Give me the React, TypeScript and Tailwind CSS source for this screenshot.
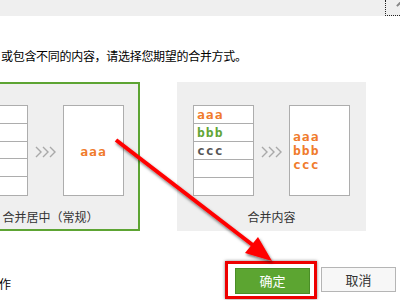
import * as React from "react";

const FONT = "font-['Noto_Sans_CJK_SC','Noto_Sans',sans-serif]";
const MONO = "font-['DejaVu_Sans_Mono','Liberation_Mono',monospace]";

type Cell = { text: string; color: string };

function Chevrons() {
  return (
    <svg width="22" height="12" viewBox="0 0 22 12" className="shrink-0">
      {[0, 7, 14].map((x) => (
        <polyline key={x} points={`${x + 1},1 ${x + 6},6 ${x + 1},11`} fill="none" stroke="#a9a9a9" strokeWidth="1.4" />
      ))}
    </svg>
  );
}

function Table({ cells }: { cells: Cell[] }) {
  return (
    <div className="w-[61px] h-[91px] border border-[#adadad] bg-white flex flex-col">
      {[0, 1, 2, 3, 4].map((i) => (
        <div
          key={i}
          className={`h-[18px] flex items-center pl-[3px] ${i < 4 ? "border-b border-[#adadad]" : ""} text-[13px] font-bold tracking-[1px] ${MONO}`}
          style={{ color: cells[i]?.color }}
        >
          {cells[i]?.text}
        </div>
      ))}
    </div>
  );
}

function Card({
  cells,
  result,
  label,
  active,
}: {
  cells: Cell[];
  result: React.ReactNode;
  label: string;
  active?: boolean;
}) {
  return (
    <div
      className={`w-[189px] h-[149px] shrink-0 bg-[#efefef] flex flex-col ${
        active ? "border-2 border-[#5da433]" : ""
      }`}
    >
      <div className={`flex items-center ${active ? "pt-[21px] pl-[14px]" : "pt-[23px] pl-[16px]"}`}>
        <Table cells={cells} />
        <div className="ml-[7px] mr-[6px] mt-[2px]">
          <Chevrons />
        </div>
        <div className="w-[61px] h-[91px] border border-[#adadad] bg-white">{result}</div>
      </div>
      <div className={`mt-[12px] text-center text-[12px] text-[#333] ${active ? "pl-[10px]" : ""} ${FONT}`}>{label}</div>
    </div>
  );
}

export default function App() {
  return (
    <div className={`relative w-[400px] h-[300px] bg-white overflow-hidden ${FONT}`}>
      {/* title bar */}
      <div className="h-[16px] bg-[#efefef] flex justify-end">
        <div className="relative w-[15px] h-[16px] border-l border-b border-dotted border-[#222]">
          <div className="absolute right-[0px] top-[1px] w-[2px] h-[6px] bg-[#888] rotate-45" />
        </div>
      </div>

      <div className="mt-[31px] ml-[1px] text-[12px] leading-[18px] tracking-[-0.3px] text-black whitespace-nowrap">
        或包含不同的内容，请选择您期望的合并方式。
      </div>

      <div className="flex gap-[37px] -ml-[49px] mt-[17px]">
        <Card
          active
          cells={[]}
          label="合并居中（常规）"
          result={
            <div className={`pt-[36px] text-center text-[13px] font-bold tracking-[1px] text-[#f07b2c] ${MONO}`}>aaa</div>
          }
        />
        <Card
          cells={[
            { text: "aaa", color: "#f07b2c" },
            { text: "bbb", color: "#62a536" },
            { text: "ccc", color: "#555555" },
          ]}
          label="合并内容"
          result={
            <div className={`pt-[24px] pl-[3px] flex flex-col leading-[14px] text-[13px] font-bold tracking-[1px] text-[#f07b2c] ${MONO}`}>
              <span>aaa</span>
              <span>bbb</span>
              <span>ccc</span>
            </div>
          }
        />
      </div>

      {/* footer */}
      <div className="flex items-center mt-[30px]">
        <div className="-ml-[1px] text-[12px] text-black mt-[7px]">作</div>
        <div className="ml-auto mr-[4px] flex items-start">
          <div className="border-[3px] border-[#ee0000] w-[92px] h-[38px] pl-[7px] pt-[3px] shadow-[0_0_3px_rgba(0,0,0,0.5)]">
            <button className="w-[75px] h-[26px] bg-[#5ca531] border border-[#4a8d27] text-white text-[13px]">确定</button>
          </div>
          <button className="ml-[4px] mt-[6px] w-[75px] h-[25px] bg-[#f7f7f7] border border-[#b5b5b5] text-[#333] text-[13px]">
            取消
          </button>
        </div>
      </div>

      {/* red arrow overlay */}
      <svg className="absolute left-0 top-0 pointer-events-none" width="400" height="300">
        <defs>
          <filter id="sh" x="-20%" y="-20%" width="140%" height="140%">
            <feDropShadow dx="1" dy="2" stdDeviation="1.5" floodColor="#000" floodOpacity="0.55" />
          </filter>
        </defs>
        <g filter="url(#sh)">
          <line x1="116" y1="140" x2="254" y2="246" stroke="#ff0000" strokeWidth="4" />
          <polygon points="272,261 258,237 245,253" fill="#ff0000" />
        </g>
      </svg>
    </div>
  );
}
